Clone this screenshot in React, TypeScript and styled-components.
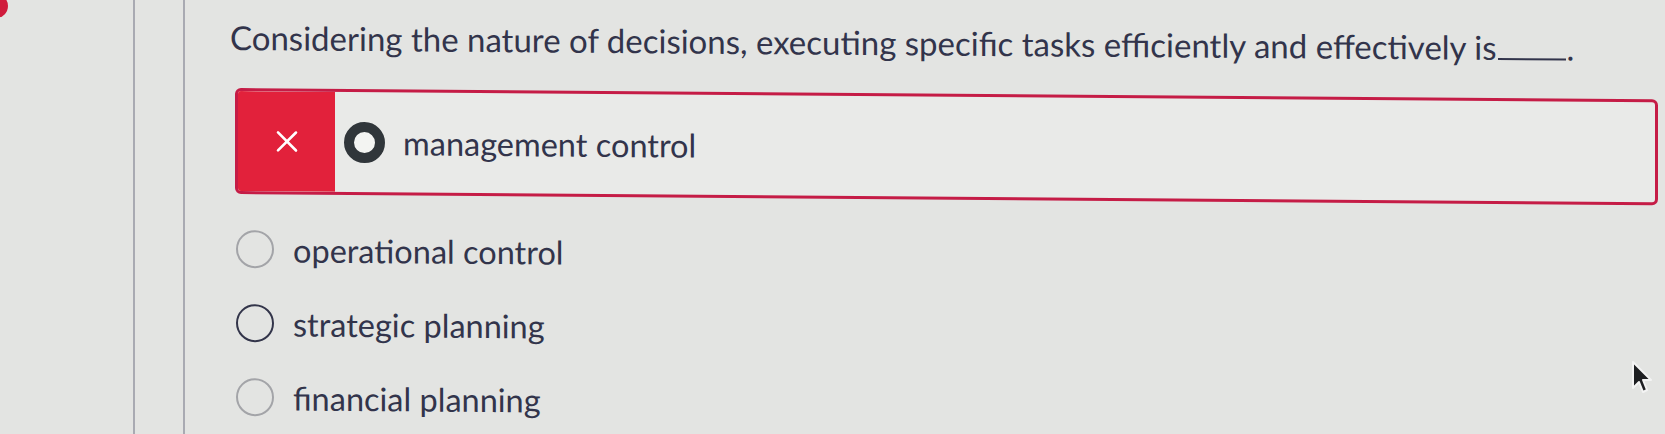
import React from "react";
import styled, { createGlobalStyle } from "styled-components";

const GlobalStyle = createGlobalStyle`
  html, body {
    margin: 0;
    padding: 0;
    background: #e3e4e2;
  }
  body {
    font-family: Lato, "Noto Sans", "Liberation Sans", sans-serif;
    color: #32344b;
  }
`;

const Page = styled.div`
  position: relative;
  display: flex;
  width: 1665px;
  height: 434px;
  overflow: hidden;
  background: #e3e4e2;
`;

const Gutter = styled.div`
  display: flex;
  gap: 48px;
  width: 230px;
  flex-shrink: 0;
  padding-left: 133px;
  box-sizing: border-box;
`;

const Rule = styled.div`
  width: 2px;
  height: 100%;
  background: #a9aab2;
`;

// slight skew: the original is a photo of a screen taken at an angle
const Main = styled.main`
  flex: 1;
  display: flex;
  flex-direction: column;
  padding: 17px 7px 0 0;
  transform: skewY(0.45deg);
  transform-origin: 0 0;
`;

const Question = styled.h1`
  margin: 0;
  font-size: 33px;
  line-height: 40px;
  font-weight: 400;
  color: #32344b;
  white-space: nowrap;
`;

const Blank = styled.span`
  display: inline-block;
  width: 68px;
  margin-left: 2px;
  border-bottom: 2px solid #32344b;
`;

const AnswerBox = styled.div`
  display: flex;
  align-items: stretch;
  height: 106px;
  margin: 31px 0 0 5px;
  border: 3px solid #c51c46;
  border-radius: 6px;
  background: #e9eae8;
  overflow: hidden;
  box-sizing: border-box;
`;

const MarkPanel = styled.div`
  display: flex;
  align-items: center;
  justify-content: center;
  width: 97px;
  flex-shrink: 0;
  background: #e2213b;
`;

const SelectedChoice = styled.div`
  display: flex;
  align-items: center;
  gap: 18px;
  padding-left: 9px;
  font-size: 32.5px;
`;

const Options = styled.div`
  display: flex;
  flex-direction: column;
  margin: 18px 0 0 6px;
`;

const Choice = styled.label`
  display: flex;
  align-items: center;
  gap: 19px;
  height: 74px;
  font-size: 32.5px;
  color: #32344b;
`;

const Radio = styled.span<{ $tone: "light" | "dark" | "selected" }>`
  display: inline-block;
  box-sizing: border-box;
  border-radius: 50%;
  flex-shrink: 0;
  width: ${(p) => (p.$tone === "selected" ? "41px" : "38px")};
  height: ${(p) => (p.$tone === "selected" ? "41px" : "38px")};
  background: ${(p) => (p.$tone === "selected" ? "#f3f4f2" : "transparent")};
  border: ${(p) =>
    p.$tone === "selected"
      ? "10px solid #30363a"
      : p.$tone === "dark"
      ? "2.5px solid #33354a"
      : "2.5px solid #a3a4a8"};
`;

const CornerDot = styled.div`
  position: absolute;
  left: -16px;
  top: -6px;
  width: 24px;
  height: 24px;
  border-radius: 50%;
  background: #d01c3c;
`;

const Pointer = styled.svg`
  position: absolute;
  left: 1630px;
  top: 359px;
`;

const options: { label: string; tone: "light" | "dark" }[] = [
  { label: "operational control", tone: "light" },
  { label: "strategic planning", tone: "dark" },
  { label: "financial planning", tone: "light" },
];

export default function App() {
  return (
    <>
      <GlobalStyle />
      <Page>
        <CornerDot />
        <Gutter>
          <Rule />
          <Rule />
        </Gutter>
        <Main>
          <Question>
            Considering the nature of decisions, executing specific tasks efficiently and effectively is
            <Blank />.
          </Question>
          <AnswerBox>
            <MarkPanel>
              <svg width="22" height="22" viewBox="0 0 22 22">
                <path d="M2 2 L20 20 M20 2 L2 20" stroke="#fff" strokeWidth="2.6" strokeLinecap="round" />
              </svg>
            </MarkPanel>
            <SelectedChoice>
              <Radio $tone="selected" />
              management control
            </SelectedChoice>
          </AnswerBox>
          <Options>
            {options.map((o) => (
              <Choice key={o.label}>
                <Radio $tone={o.tone} />
                {o.label}
              </Choice>
            ))}
          </Options>
        </Main>
        <Pointer width="26" height="38" viewBox="0 0 26 38">
          <path
            d="M3 3 L3 29 L9 23 L13 33 L17 31 L13 21 L21 21 Z"
            fill="#1e1f22"
            stroke="#f4f4f4"
            strokeWidth="2"
            strokeLinejoin="round"
          />
        </Pointer>
      </Page>
    </>
  );
}
